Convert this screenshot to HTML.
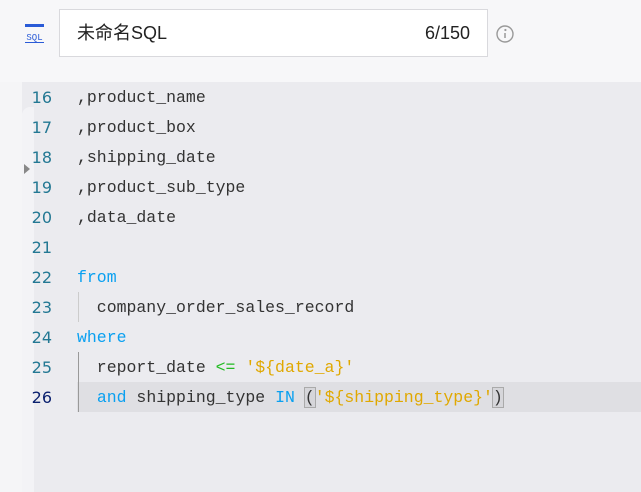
<!DOCTYPE html>
<html><head><meta charset="utf-8"><style>
body{margin:0;width:641px;height:492px;overflow:hidden;background:#f5f5f7;font-family:"Liberation Sans","Noto Sans CJK SC",sans-serif;position:relative}
.hdr{position:absolute;left:0;top:0;width:641px;height:82px;background:#f7f7f9}
.inp{position:absolute;left:59px;top:9px;width:427px;height:46px;background:#fff;border:1px solid #d9d9dd}
.t{position:absolute;left:17px;top:0;line-height:46px;font-size:18px;color:#222}
.c{position:absolute;right:17px;top:0;line-height:46px;font-size:18px;color:#222}
.ed{position:absolute;left:22px;top:82px;width:619px;height:410px;background:#ebebef}
.g{position:absolute;left:22px;top:107px;width:12px;height:385px;background:#f3f3f6;border-radius:8px 0 0 0}
.ln{position:absolute;left:0;width:52px;text-align:right;font:16px "DejaVu Sans",sans-serif;color:#237893;line-height:30px}
.code{position:absolute;left:77px;font:16.5px "Liberation Mono",monospace;color:#333;line-height:30px;white-space:pre}
.k{color:#0aa0f0}.s{color:#e0a800}.o{color:#22bb22}
.bar{position:absolute;width:1px;background:#ccc}
</style></head><body>
<div class="hdr">
<svg style="position:absolute;left:25px;top:24px" width="20" height="20" viewBox="0 0 20 20"><rect x="0" y="0" width="19" height="3" fill="#2a5bd7"/><text x="9.5" y="16" font-family="Liberation Mono" font-size="9" fill="#2a5bd7" text-anchor="middle">SQL</text><rect x="0" y="18" width="19" height="1" fill="#2a5bd7"/></svg>
<div class="inp"><span class="t">未命名SQL</span><span class="c">6/150</span></div>
<svg style="position:absolute;left:495px;top:24px" width="20" height="20" viewBox="0 0 20 20"><circle cx="10" cy="10" r="8" fill="none" stroke="#999" stroke-width="1.4"/><circle cx="10.4" cy="6" r="1.1" fill="#999"/><path d="M10 9v5" stroke="#999" stroke-width="1.5"/></svg>
</div>
<div class="ed"></div>
<div class="g"></div>
<svg style="position:absolute;left:24px;top:164px" width="8" height="10"><path d="M0 0L6 5L0 10Z" fill="#888"/></svg>
<div style="position:absolute;left:77px;top:382px;width:564px;height:30px;background:#dfdfe3"></div>
<div class="bar" style="left:78px;top:292px;height:30px"></div>
<div class="bar" style="left:78px;top:352px;height:60px;background:#999"></div>
<div class="ln" style="top:83px">16<br>17<br>18<br>19<br>20<br>21<br>22<br>23<br>24<br>25<br><span style="color:#0b216f">26</span></div>
<div class="code" style="top:83px">,product_name
,product_box
,shipping_date
,product_sub_type
,data_date

<span class="k">from</span>
  company_order_sales_record
<span class="k">where</span>
  report_date <span class="o">&lt;=</span> <span class="s">'${date_a}'</span>
  <span class="k">and</span> shipping_type <span class="k">IN</span> <span style="outline:1px solid #aaa;background:#d6d6da">(</span><span class="s">'${shipping_type}'</span><span style="outline:1px solid #aaa;background:#d6d6da">)</span></div>
</body></html>
